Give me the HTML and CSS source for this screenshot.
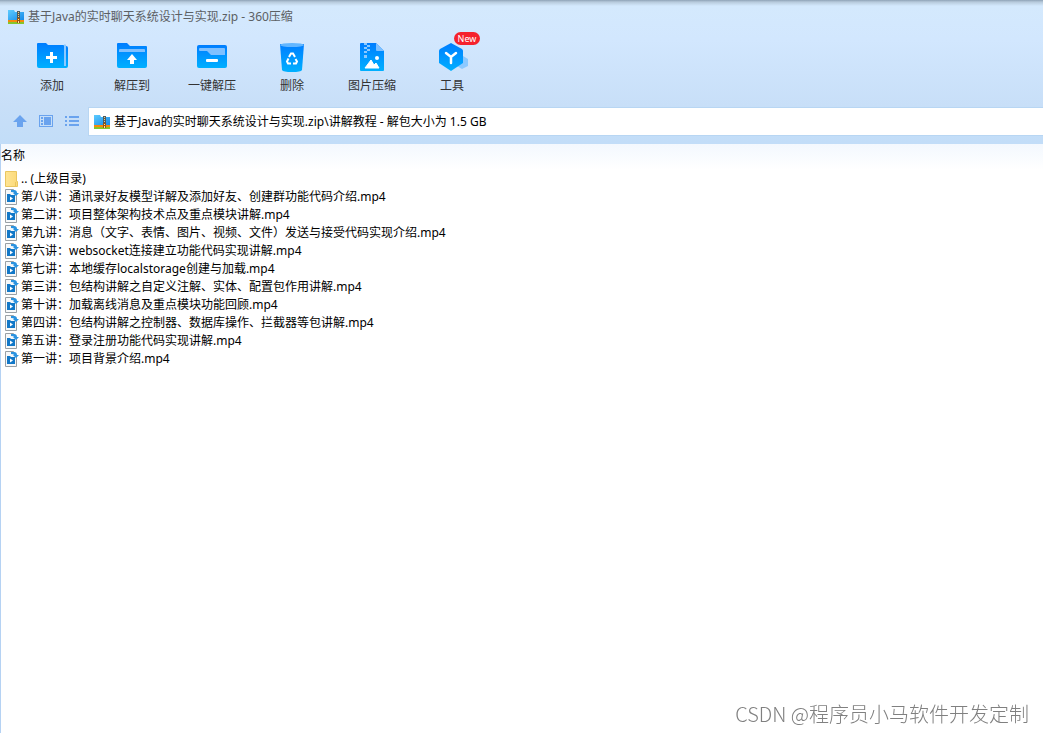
FILE: index.html
```html
<!DOCTYPE html>
<html lang="zh-CN">
<head>
  <meta charset="UTF-8" />
  <meta name="viewport" content="width=device-width, initial-scale=1.0"/>
  <title>基于Java的实时聊天系统设计与实现.zip - 360压缩</title>
  <link rel="stylesheet" href="styles.css">
</head>
<body>

<!-- shared icons -->
<svg class="defs" aria-hidden="true">
  <defs>
    <linearGradient id="blue" x1="0" y1="0" x2="0" y2="1">
      <stop offset="0" stop-color="#007dff"/>
      <stop offset="1" stop-color="#00b0ff"/>
    </linearGradient>
    <linearGradient id="cyan" x1="0" y1="0" x2="1" y2="1">
      <stop offset="0" stop-color="#5dccff"/>
      <stop offset="1" stop-color="#1689e8"/>
    </linearGradient>
    <linearGradient id="paper" x1="0" y1="0" x2="1" y2="0">
      <stop offset="0" stop-color="#ffe594"/>
      <stop offset="1" stop-color="#fbd978"/>
    </linearGradient>
    <symbol id="zip" viewBox="0 0 16 16">
      <path d="M0 1h6l1 2h9v8H0z" fill="url(#cyan)"/>
      <path d="M0 11h16v2H0z" fill="#f48a0c"/>
      <path d="M0 13h16v2H0z" fill="#86c52c"/>
      <path d="M9 2h3v8H9z" fill="#4f5a5e"/>
      <path d="M10 3h1v1h-1zM10 5h1v1h-1zM10 7h1v1h-1z" fill="#f2cf7c"/>
      <path d="M9 9h3v5H9z" fill="#9a5410"/>
      <path d="M10 10h1v1h-1zM10 12h1v2h-1z" fill="#ffe49a"/>
    </symbol>
    <symbol id="video" viewBox="0 0 14 16">
      <path d="M.5 .5h8l3 4v11H.5z" fill="#f7f8f9" stroke="#9aa0a5"/>
      <path d="M6 1h3q3 0 3 3h2l-3 3-3-3h1q0-1-3-1z" fill="#2b93e0"/>
      <path d="M2 5h3l1 1h4v7H2z" fill="#1278c8"/>
      <path d="M5 7.500l3 2-3 2z" fill="#fff"/>
    </symbol>
  </defs>
</svg>

<header class="header">
  <!-- TITLE -->
  <div class="title-bar">
    <svg class="icon-zip"><use href="#zip"/></svg>
    <span>基于Java的实时聊天系统设计与实现.zip - 360压缩</span>
  </div>

  <!-- TOOLBAR -->
  <nav class="toolbar">
    <button class="tool">
      <svg viewBox="0 0 40 36">
        <path d="M24 7h10a2 2 0 0 1 2 2v18a2 2 0 0 1-2 2H24z" fill="url(#blue)"/>
        <path d="M20 6h12a1 1 0 0 1 2 1v20h-2V8H20z" fill="#8cc9ff"/>
        <path d="M5 5a1 1 0 0 1 1-1h8l2 2h15a1 1 0 0 1 1 1v22H7a2 2 0 0 1-2-2z" fill="url(#blue)"/>
        <path d="M18 13h3v4h4v3h-4v4h-3v-4h-4v-3h4z" fill="#fff"/>
      </svg>
      <span>添加</span>
    </button>
    <button class="tool">
      <svg viewBox="0 0 40 36">
        <path d="M5 5a1 1 0 0 1 1-1h9l3 3h16a1 1 0 0 1 1 1v19a2 2 0 0 1-2 2H7a2 2 0 0 1-2-2z" fill="url(#blue)"/>
        <path d="M7 13v-2a1 1 0 0 1 1-1h24a1 1 0 0 1 1 1v2z" fill="#7fc0ff"/>
        <path d="M20 15l5 6h-3v4h-4v-4h-3z" fill="#fff"/>
      </svg>
      <span>解压到</span>
    </button>
    <button class="tool">
      <svg viewBox="0 0 40 36">
        <rect x="5" y="6" width="30" height="23" rx="2" fill="url(#blue)"/>
        <path d="M7 10a1 1 0 0 1 1-1h24a1 1 0 0 1 1 1v6H19l-4-4H8a1 1 0 0 1-1-1z" fill="#7fc0ff"/>
        <rect x="14" y="20" width="12" height="3" rx="1" fill="#fff"/>
      </svg>
      <span>一键解压</span>
    </button>
    <button class="tool">
      <svg viewBox="0 0 40 36">
        <path d="M8 5h24l-2 26q-1 2-10 2t-10-2z" fill="url(#blue)"/>
        <ellipse cx="20" cy="6" rx="12" ry="2" fill="#62b6ff"/>
        <g fill="none" stroke="#fff" stroke-width="2">
          <path d="M17 18l2-3.500h2l2 3.500"/>
          <path d="M23.500 20l1.500 2.500-1 2h-3"/>
          <path d="M19 24.500h-3l-1-2 1.500-3"/>
        </g>
      </svg>
      <span>删除</span>
    </button>
    <button class="tool">
      <svg viewBox="0 0 40 36">
        <path d="M8 5a1 1 0 0 1 1-1h15l8 8v19a1 1 0 0 1-1 1H9a1 1 0 0 1-1-1z" fill="url(#blue)"/>
        <path d="M24 4l8 8h-7a1 1 0 0 1-1-1z" fill="#7fc0ff"/>
        <path d="M12 4h3v2h3v2h-3v2h3v2h-3v2h-3v-2h3v-2h-3V8h3V6h-3zM12 16h3v3h-3z" fill="#8cc9ff"/>
        <path d="M13 29l6-8 3 5 2-2 3 5z" fill="#fff" stroke="#fff" stroke-linejoin="round"/>
        <circle cx="25" cy="19" r="2" fill="#fff"/>
      </svg>
      <span>图片压缩</span>
    </button>
    <button class="tool">
      <svg viewBox="0 0 40 36">
        <path d="M31 17l5 3v7l-6 3-5-3z" fill="#8cc9ff"/>
        <path d="M19 4l11 6q1 1 1 2v12l-12 8-12-8V12q0-1 1-2z" fill="url(#blue)"/>
        <path d="M14 14l5 4 5-4M19 18v6" fill="none" stroke="#fff" stroke-width="2.500" stroke-linecap="round"/>
      </svg>
      <span>工具</span>
      <em class="badge">New</em>
    </button>
  </nav>

  <!-- ADDRESS -->
  <div class="address-row">
    <button class="nav-btn" aria-label="向上">
      <svg viewBox="0 0 16 16"><path d="M8 1l7 7h-4v5H5V8H1z"/></svg>
    </button>
    <button class="nav-btn" aria-label="预览">
      <svg viewBox="0 0 16 16"><path d="M1 1h14v12H1zM2 2v10h12V2zM3 3h2v2H3zM3 6h2v2H3zM3 9h2v2H3zM6 3h7v8H6z" fill-rule="evenodd"/></svg>
    </button>
    <button class="nav-btn" aria-label="列表">
      <svg viewBox="0 0 16 16"><path d="M1 2h2v2H1zM5 2h10v2H5zM1 6h2v2H1zM5 6h10v2H5zM1 10h2v2H1zM5 10h10v2H5z"/></svg>
    </button>
    <label class="address">
      <svg class="icon-zip"><use href="#zip"/></svg>
      <input type="text" aria-label="路径" value="基于Java的实时聊天系统设计与实现.zip\讲解教程 - 解包大小为 1.5 GB">
    </label>
  </div>
</header>

<!-- FILE LIST -->
<main class="content">
  <table class="files">
    <thead>
      <tr><th>名称</th></tr>
    </thead>
    <tbody>
      <tr><td><div class="file"><svg viewBox="0 0 14 16"><path d="M.5 .5h11v10h1v5H.5z" fill="url(#paper)" stroke="#eac65f"/><path d="M10.500 15v-4" stroke="#eac65f"/></svg>.. (上级目录)</div></td></tr>
      <tr><td><div class="file"><svg><use href="#video"/></svg>第八讲：通讯录好友模型详解及添加好友、创建群功能代码介绍.mp4</div></td></tr>
      <tr><td><div class="file"><svg><use href="#video"/></svg>第二讲：项目整体架构技术点及重点模块讲解.mp4</div></td></tr>
      <tr><td><div class="file"><svg><use href="#video"/></svg>第九讲：消息（文字、表情、图片、视频、文件）发送与接受代码实现介绍.mp4</div></td></tr>
      <tr><td><div class="file"><svg><use href="#video"/></svg>第六讲：websocket连接建立功能代码实现讲解.mp4</div></td></tr>
      <tr><td><div class="file"><svg><use href="#video"/></svg>第七讲：本地缓存localstorage创建与加载.mp4</div></td></tr>
      <tr><td><div class="file"><svg><use href="#video"/></svg>第三讲：包结构讲解之自定义注解、实体、配置包作用讲解.mp4</div></td></tr>
      <tr><td><div class="file"><svg><use href="#video"/></svg>第十讲：加载离线消息及重点模块功能回顾.mp4</div></td></tr>
      <tr><td><div class="file"><svg><use href="#video"/></svg>第四讲：包结构讲解之控制器、数据库操作、拦截器等包讲解.mp4</div></td></tr>
      <tr><td><div class="file"><svg><use href="#video"/></svg>第五讲：登录注册功能代码实现讲解.mp4</div></td></tr>
      <tr><td><div class="file"><svg><use href="#video"/></svg>第一讲：项目背景介绍.mp4</div></td></tr>
    </tbody>
  </table>
</main>

<div class="watermark">CSDN @程序员小马软件开发定制</div>

</body>
</html>
```
FILE: styles.css
```css
* {
  box-sizing: border-box;
}
body {
  margin: 0;
  min-height: 100vh;
  display: flex;
  flex-direction: column;
  font-family: "Noto Sans", "Noto Sans CJK SC", sans-serif;
  font-size: 12px;
  line-height: 18px;
  color: #000;
  background-color: #fff;
}
button,
input {
  font: inherit;
  color: inherit;
  border: none;
  padding: 0;
  background: none;
}
button {
  cursor: pointer;
}
.defs {
  position: absolute;
  width: 0;
  height: 0;
}
.icon-zip {
  width: 16px;
  height: 16px;
  flex: none;
}

/* header */
.header {
  padding-bottom: 8px;
  background: linear-gradient(#8ea3b6 0, #b7cadb 2px, #d4e9fd 6px, #d2e7fe 40px, #c8dff8 105px, #c2ddf8 144px);
}
.title-bar {
  display: flex;
  align-items: center;
  gap: 4px;
  height: 34px;
  padding-left: 8px;
  color: #5c6064;
}
.toolbar {
  display: flex;
  padding: 5px 0 0 12px;
  height: 73px;
}
.tool {
  position: relative;
  display: flex;
  flex-direction: column;
  align-items: center;
  width: 80px;
  height: 57px;
  color: #333;
}
.tool svg {
  width: 40px;
  height: 36px;
  margin-bottom: 2px;
}
.badge {
  position: absolute;
  top: -7px;
  right: 12px;
  width: 26px;
  height: 13px;
  border-radius: 7px;
  background-color: #f5222d;
  color: #fff;
  font-size: 9px;
  font-style: normal;
  line-height: 13px;
}
.address-row {
  display: flex;
  align-items: center;
  gap: 10px;
  padding-left: 12px;
}
.nav-btn {
  width: 16px;
  height: 16px;
}
.nav-btn svg {
  display: block;
  width: 16px;
  height: 16px;
  fill: #6aa3ee;
}
.address {
  flex: 1;
  display: flex;
  align-items: center;
  gap: 4px;
  height: 29px;
  margin-left: -2px;
  padding-left: 5px;
  border: 1px solid #b8d6f3;
  border-right: none;
  background-color: #fff;
}
.address input {
  flex: 1;
  min-width: 0;
  outline: none;
}

/* file list */
.content {
  flex: 1;
  border-left: 1px solid #b5d2f3;
}
.files {
  width: 100%;
  border-collapse: collapse;
}
.files th {
  height: 26px;
  padding: 0 0 2px;
  font-weight: normal;
  text-align: left;
  background: linear-gradient(#f3f8fe, #fff);
}
.files td {
  padding: 0;
}
.file {
  display: flex;
  align-items: center;
  gap: 2px;
  height: 18px;
  padding-left: 4px;
  white-space: nowrap;
}
.file svg {
  width: 14px;
  height: 16px;
  flex: none;
}

.watermark {
  position: fixed;
  right: 14px;
  bottom: 4px;
  font-family: "Noto Sans CJK SC", sans-serif;
  font-size: 20px;
  font-weight: 300;
  line-height: 30px;
  color: #808080;
}
```
